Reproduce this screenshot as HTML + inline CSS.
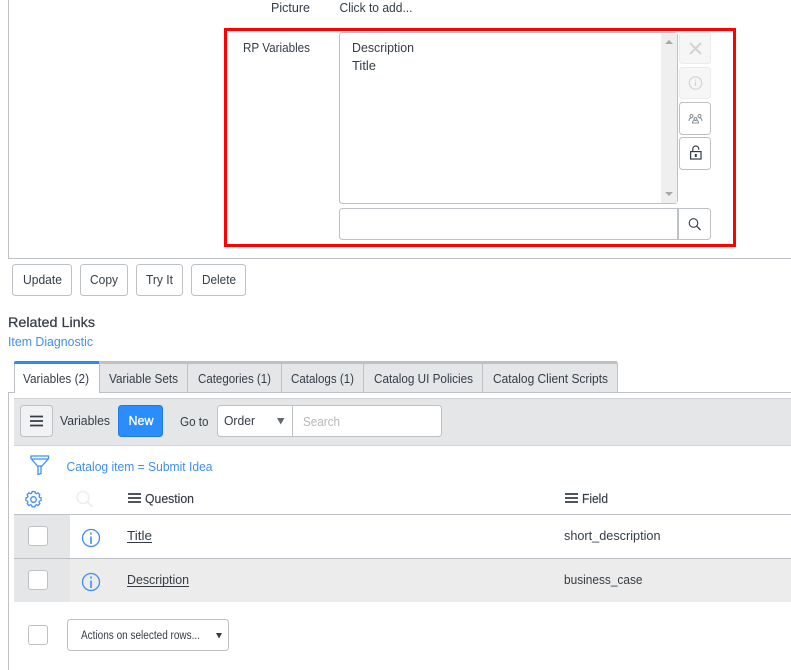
<!DOCTYPE html>
<html lang="en">
<head>
<meta charset="utf-8">
<title>Catalog item form</title>
<style>
html,body{margin:0;padding:0;background:#fff;width:791px;height:670px;overflow:hidden}
svg{display:block;position:absolute;left:0;top:0}
text{font-family:"Liberation Sans",sans-serif;font-size:13px;fill:#343d47}
.b{fill:#fff;stroke:#bdc0c4;stroke-width:1}
.d{fill:#f6f6f6;stroke:#ebebeb;stroke-width:1}
.ic{fill:none;stroke:#343d47}
.bl{fill:none;stroke:#3f8ff5}
</style>
</head>
<body>
<svg width="791" height="670" viewBox="0 0 791 670" xmlns="http://www.w3.org/2000/svg">
<!-- form frame -->
<path d="M8.5 0V258.5H791" fill="none" stroke="#bdc0c4"/>
<text x="271" y="12" textLength="39" lengthAdjust="spacingAndGlyphs">Picture</text>
<text x="339.5" y="12" textLength="73" lengthAdjust="spacingAndGlyphs">Click to add...</text>

<!-- slushbucket -->
<text x="243" y="52" textLength="67" lengthAdjust="spacingAndGlyphs">RP Variables</text>
<rect class="b" x="339.5" y="32.5" width="338" height="171" rx="3"/>
<rect x="661" y="33" width="16" height="170" fill="#efefef"/>
<path d="M665 44l4-4 4 4z" fill="#a8a8a8"/>
<path d="M665 192l4 4 4-4z" fill="#a8a8a8"/>
<text x="352" y="52" textLength="62" lengthAdjust="spacingAndGlyphs">Description</text>
<text x="352" y="70" textLength="24" lengthAdjust="spacingAndGlyphs">Title</text>

<rect class="d" x="679.5" y="32.5" width="31" height="31" rx="3"/>
<path d="M690 43l11 11M701 43l-11 11" fill="none" stroke="#d2d3d5" stroke-width="2"/>
<rect class="d" x="679.5" y="67.5" width="31" height="31" rx="3"/>
<circle cx="695.5" cy="83" r="6.2" fill="none" stroke="#d2d3d5" stroke-width="1.2"/>
<path d="M695.5 82v4M695.5 79.5v1.4" stroke="#d2d3d5" stroke-width="1.2"/>
<rect class="b" x="679.5" y="102.5" width="31" height="32" rx="3"/>
<g fill="none" stroke="#6a737c" stroke-width=".8">
<circle cx="691.5" cy="116" r="1.5"/><circle cx="695.5" cy="119" r="1.5"/><circle cx="699.5" cy="116" r="1.5"/>
<path d="M689 121c0-2 1-3 2.500-3M692.500 123c0-2 1-3 3-3s3 1 3 3zM702 121c0-2-1-3-2.500-3"/>
</g>
<rect class="b" x="679.5" y="137.5" width="31" height="32" rx="3"/>
<rect x="690.6" y="151.6" width="10.4" height="7.4" fill="none" stroke="#343d47" stroke-width="1.200"/>
<path d="M692.8 151.500v-2.500a3 3 0 0 1 6 0v.8" fill="none" stroke="#343d47" stroke-width="1.200"/>
<rect x="694.800" y="154" width="2" height="3" fill="#343d47"/>

<rect class="b" x="339.5" y="208.5" width="371" height="31" rx="3"/>
<path d="M678 209v30" stroke="#bdc0c4" stroke-width="2"/>
<circle cx="693.500" cy="223" r="4.300" class="ic" stroke-width="1.100"/>
<path d="M696.700 226.200l3.800 3.800" class="ic" stroke-width="1.300"/>

<!-- red highlight -->
<rect x="225.500" y="29.500" width="509" height="216" fill="none" stroke="#fe0000" stroke-width="3"/>

<!-- action buttons -->
<rect class="b" x="12.500" y="264.500" width="59" height="31" rx="3"/>
<text x="23" y="284" textLength="39" lengthAdjust="spacingAndGlyphs">Update</text>
<rect class="b" x="80.500" y="264.500" width="47" height="31" rx="3"/>
<text x="90" y="284" textLength="28" lengthAdjust="spacingAndGlyphs">Copy</text>
<rect class="b" x="136.500" y="264.500" width="46" height="31" rx="3"/>
<text x="146" y="284" textLength="27" lengthAdjust="spacingAndGlyphs">Try It</text>
<rect class="b" x="191.500" y="264.500" width="54" height="31" rx="3"/>
<text x="202" y="284" textLength="34" lengthAdjust="spacingAndGlyphs">Delete</text>

<!-- related links -->
<text x="8" y="327" textLength="87" lengthAdjust="spacingAndGlyphs" style="font-size:14px;stroke:#343d47;stroke-width:.25">Related Links</text>
<text x="8" y="346" textLength="85" lengthAdjust="spacingAndGlyphs" style="fill:#3f8ff5">Item Diagnostic</text>

<!-- tabs -->
<path d="M8.500 670V392.500H14.500M99 392.500H791" fill="none" stroke="#bdc0c4"/>
<rect x="99" y="364" width="518" height="28" fill="#e5e6e8"/>
<path d="M99 361H615a3 3 0 0 1 3 3V392H617V364H99z" fill="#bdc0c4"/>
<rect x="99" y="361" width="518" height="3" fill="#bdc0c4"/>
<path d="M99.500 364V392M187.500 364V392M281.500 364V392M363.500 364V392M482.500 364V392" stroke="#bdc0c4"/>
<path d="M14.500 393V364M99.500 364V393" stroke="#bdc0c4" fill="none"/>
<path d="M14 364v-1a2 2 0 0 1 2-2H99v3z" fill="#2b8cf5"/>
<text x="23" y="383" textLength="66" lengthAdjust="spacingAndGlyphs">Variables (2)</text>
<text x="109" y="383" textLength="69" lengthAdjust="spacingAndGlyphs">Variable Sets</text>
<text x="198" y="383" textLength="73" lengthAdjust="spacingAndGlyphs">Categories (1)</text>
<text x="291" y="383" textLength="63" lengthAdjust="spacingAndGlyphs">Catalogs (1)</text>
<text x="374" y="383" textLength="99" lengthAdjust="spacingAndGlyphs">Catalog UI Policies</text>
<text x="493" y="383" textLength="115" lengthAdjust="spacingAndGlyphs">Catalog Client Scripts</text>

<!-- list header -->
<rect x="14" y="398" width="777" height="48" fill="#e5e6e8"/>
<path d="M14 398.500H791M14 445.500H791" stroke="#d2d3d6"/>
<rect x="20.500" y="405.500" width="32" height="31" rx="3" fill="#f1f2f3" stroke="#bdc0c4"/>
<path d="M30 416.500H43M30 421H43M30 425.500H43" stroke="#343d47" stroke-width="1.800"/>
<text x="60" y="425" textLength="50" lengthAdjust="spacingAndGlyphs">Variables</text>
<rect x="118.500" y="405.500" width="44" height="31" rx="3" fill="#2b8cfb" stroke="#1f7ae0"/>
<text x="128.500" y="425" textLength="25" lengthAdjust="spacingAndGlyphs" style="fill:#fff;stroke:#fff;stroke-width:.3">New</text>
<text x="180" y="426" textLength="28.500" lengthAdjust="spacingAndGlyphs">Go to</text>
<rect class="b" x="217.500" y="405.500" width="224" height="31" rx="3"/>
<path d="M292.500 406V436" stroke="#bdc0c4"/>
<text x="224" y="425" textLength="31" lengthAdjust="spacingAndGlyphs">Order</text>
<path d="M277 418h7.500l-3.750 6.500z" fill="#62696f"/>
<text x="303" y="426" textLength="37" lengthAdjust="spacingAndGlyphs" style="fill:#b4b7bb">Search</text>

<!-- breadcrumb -->
<path class="bl" stroke-width="1.300" d="M31 456H48.500V458.500L42 466H37.500L31 458.500ZM31 459H48.500M37.500 466H41V473.500L38 474.500V466"/>
<text x="66.500" y="471" textLength="146" lengthAdjust="spacingAndGlyphs" style="fill:#3f8ff5">Catalog item = Submit Idea</text>

<!-- column header -->
<g class="bl">
<path stroke-width="1.900" transform="translate(33.5 499.5) scale(.68) translate(-33.5 -503.2)" d="M31.500 491.500h4l.7 2.300 1.700.8 2.200-1.200 2.700 2.800-1.100 2.100.7 1.800 2.300.7v3.900l-2.300.7-.7 1.800 1.100 2.100-2.700 2.800-2.200-1.200-1.700.8-.7 2.300h-4l-.7-2.300-1.700-.8-2.200 1.200-2.700-2.800 1.100-2.100-.7-1.800-2.300-.7v-3.900l2.300-.7.7-1.800-1.100-2.100 2.700-2.800 2.200 1.200 1.700-.8z"/>
<circle cx="33.500" cy="499.500" r="2.800" stroke-width="1.300"/>
</g>
<circle cx="83" cy="497.500" r="6" fill="none" stroke="#eeeeef" stroke-width="1.500"/>
<path d="M87.500 502l5 5" stroke="#eeeeef" stroke-width="1.800"/>
<path d="M128 494H141M128 498H141M128 502H141" stroke="#343d47" stroke-width="1.700"/>
<text x="145" y="503" textLength="49" lengthAdjust="spacingAndGlyphs" style="stroke:#343d47;stroke-width:.15">Question</text>
<path d="M565 494H578M565 498H578M565 502H578" stroke="#343d47" stroke-width="1.700"/>
<text x="582" y="503" textLength="26" lengthAdjust="spacingAndGlyphs" style="stroke:#343d47;stroke-width:.15">Field</text>
<path d="M14 514.500H791" stroke="#bdc0c4"/>

<!-- rows -->
<rect x="14" y="515" width="56" height="43" fill="#e5e6e8"/>
<rect x="14" y="559" width="56" height="43" fill="#e5e6e8"/>
<rect x="70" y="559" width="721" height="43" fill="#ececec"/>
<path d="M14 558.500H791" stroke="#bdc0c4"/>
<rect x="28.500" y="526.500" width="19" height="19" rx="2.500" class="b"/>
<rect x="28.500" y="570.500" width="19" height="19" rx="2.500" class="b"/>
<circle cx="91" cy="538" r="8.500" class="bl" stroke-width="1.300"/>
<path d="M91 536.500V544M91 532.500v2" class="bl" stroke-width="1.600"/>
<circle cx="91" cy="582" r="8.500" class="bl" stroke-width="1.300"/>
<path d="M91 580.500V588M91 576.500v2" class="bl" stroke-width="1.600"/>
<text x="127" y="540" textLength="25" lengthAdjust="spacingAndGlyphs">Title</text>
<path d="M127 542.500H152" stroke="#343d47"/>
<text x="127" y="584" textLength="62" lengthAdjust="spacingAndGlyphs">Description</text>
<path d="M127 586.500H189" stroke="#343d47"/>
<text x="564" y="540" textLength="96.500" lengthAdjust="spacingAndGlyphs">short_description</text>
<text x="564" y="584" textLength="78.500" lengthAdjust="spacingAndGlyphs">business_case</text>

<!-- footer -->
<rect x="28.500" y="625.500" width="19" height="19" rx="2.500" class="b"/>
<rect class="b" x="67.500" y="619.500" width="161" height="31" rx="3"/>
<text x="81" y="639" textLength="119" lengthAdjust="spacingAndGlyphs" style="font-size:11.500px">Actions on selected rows...</text>
<path d="M216 633h6l-3 5.500z" fill="#343d47"/>
</svg>
</body>
</html>
